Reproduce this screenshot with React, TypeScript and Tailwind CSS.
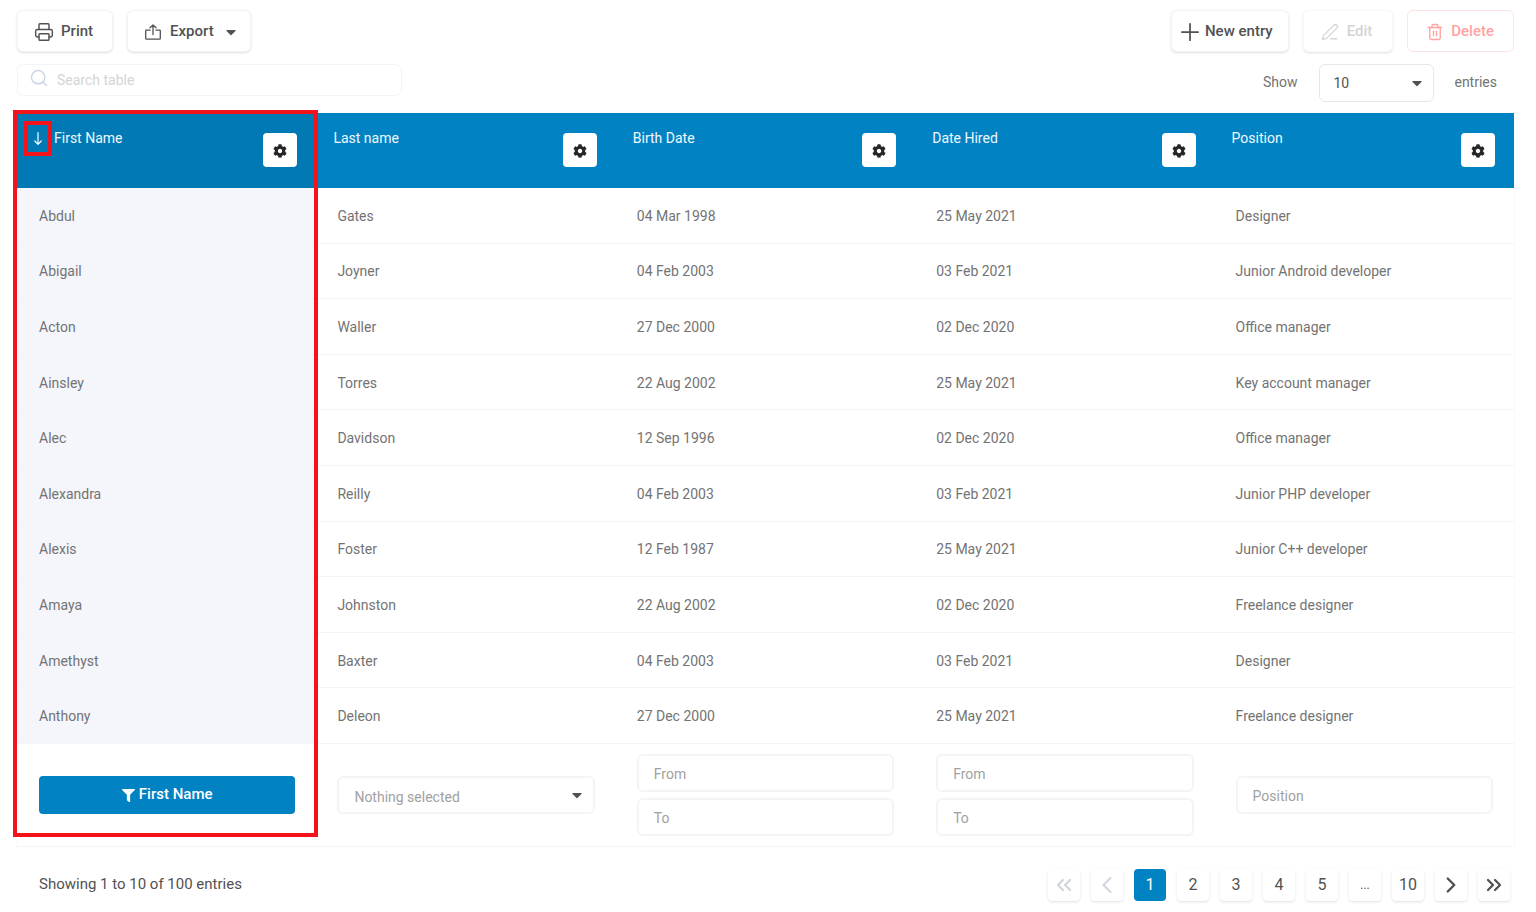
import { ChevronLeft, ChevronRight, ChevronsLeft, ChevronsRight, PenLine, Plus, Printer, Search, Trash2 } from "lucide-react";
import { FaCaretDown, FaCog, FaFilter } from "react-icons/fa";
import type { ReactNode } from "react";

const rows = [
  ["Abdul", "Gates", "04 Mar 1998", "25 May 2021", "Designer"],
  ["Abigail", "Joyner", "04 Feb 2003", "03 Feb 2021", "Junior Android developer"],
  ["Acton", "Waller", "27 Dec 2000", "02 Dec 2020", "Office manager"],
  ["Ainsley", "Torres", "22 Aug 2002", "25 May 2021", "Key account manager"],
  ["Alec", "Davidson", "12 Sep 1996", "02 Dec 2020", "Office manager"],
  ["Alexandra", "Reilly", "04 Feb 2003", "03 Feb 2021", "Junior PHP developer"],
  ["Alexis", "Foster", "12 Feb 1987", "25 May 2021", "Junior C++ developer"],
  ["Amaya", "Johnston", "22 Aug 2002", "02 Dec 2020", "Freelance designer"],
  ["Amethyst", "Baxter", "04 Feb 2003", "03 Feb 2021", "Designer"],
  ["Anthony", "Deleon", "27 Dec 2000", "25 May 2021", "Freelance designer"],
];

function Btn({ children, className = "" }: { children: ReactNode; className?: string }) {
  return (
    <button className={`flex h-10.5 items-center rounded-md border pt-0.5 text-[15px] font-medium ${className}`}>
      {children}
    </button>
  );
}

const active = "border-gray-100 bg-white text-neutral-600 shadow";

function Field({ placeholder }: { placeholder: string }) {
  return (
    <input
      placeholder={placeholder}
      className="h-9.5 w-full rounded-md border-2 border-gray-100 bg-white px-3.75 pt-0.5 text-sm outline-none placeholder:text-neutral-400"
    />
  );
}

function Gear() {
  return (
    <button className="mt-1.25 flex size-8.5 flex-none items-center justify-center rounded-sm bg-white pt-0.5 text-neutral-800">
      <FaCog size={14} />
    </button>
  );
}

function HeadCell({ label, first }: { label: string; first?: boolean }) {
  return (
    <div className={`flex items-start justify-between pt-3.75 pr-4.75 pl-4.25 ${first ? "bg-[#0079b5]" : "bg-[#0082c3]"}`}>
      <div className="flex items-center gap-3 text-sm text-sky-50">
        {first && (
          <svg width="8" height="13" viewBox="0 0 8 13" fill="none" stroke="white" strokeWidth="1.2" strokeLinecap="round" strokeLinejoin="round">
            <path d="M4 .7V12.3M.8 9 4 12.3 7.2 9" />
          </svg>
        )}
        {label}
      </div>
      <Gear />
    </div>
  );
}

function Page({ children, on, muted, small }: { children: ReactNode; on?: boolean; muted?: boolean; small?: boolean }) {
  return (
    <div
      className={`flex size-8 items-center justify-center rounded-sm ${small ? "text-xs" : "text-base"} ${
        on ? "bg-[#0082c3] text-white" : `bg-white shadow ${muted ? "text-gray-300" : "text-neutral-600"}`
      }`}
    >
      {children}
    </div>
  );
}

export default function App() {
  return (
    <div className="relative flex h-screen flex-col overflow-hidden bg-white pl-4 pr-5.25 text-sm text-neutral-500" style={{ fontFamily: "Roboto, sans-serif" }}>
      <div className="flex flex-none justify-between px-px pt-2.5 pb-2.5">
        <div className="flex flex-col gap-3">
          <div className="flex gap-3.5">
            <Btn className={`${active} gap-1.75 pl-4 pr-4.75`}>
              <Printer size={20} strokeWidth={1.75} />
              Print
            </Btn>
            <Btn className={`${active} gap-2.25 pl-4.25 pr-2.75`}>
              <svg width="16" height="16" viewBox="0 0 16 16" fill="none" stroke="currentColor" strokeWidth="1.3" strokeLinecap="round" strokeLinejoin="round">
                <path d="M5 6.2H1.2a.5.5 0 0 0-.5.5v7.6c0 .5.4.9.9.9h12.8c.5 0 .9-.4.9-.9V6.7a.5.5 0 0 0-.5-.5H11M8 10.5V1M5 3.8 8 1l3 2.8" />
              </svg>
              Export
              <FaCaretDown size={16} />
            </Btn>
          </div>
          <div className="relative w-96.25">
            <Search size={20} strokeWidth={1.75} className="absolute left-3 top-1 text-slate-300" />
            <input
              placeholder="Search table"
              className="h-8 w-full rounded-md border border-gray-100 bg-white pl-9.75 text-sm outline-none placeholder:text-neutral-300"
            />
          </div>
        </div>
        <div className="flex flex-col items-end gap-3">
          <div className="flex gap-3.5">
            <Btn className={`${active} gap-0.25 pl-1 pr-3.75`}>
              <Plus size={28} strokeWidth={1.5} />
              New entry
            </Btn>
            <Btn className="gap-2 border-gray-50 bg-white pl-4.25 pr-5 text-neutral-300 shadow-sm">
              <PenLine size={18} strokeWidth={1.75} />
              Edit
            </Btn>
            <Btn className="gap-1.75 border-red-100 bg-white pl-4.5 pr-4.75 text-red-300">
              <Trash2 size={18} strokeWidth={1.75} />
              Delete
            </Btn>
          </div>
          <div className="flex h-9.5 items-center gap-5.25 pr-4.25">
            <span className="pb-0.5">Show</span>
            <div className="-mr-px ml-px flex h-9.5 w-28.75 items-center justify-between rounded-md border border-gray-200 pl-3.25 pr-2 text-neutral-600">
              <span>10</span>
              <FaCaretDown size={16} className="text-neutral-600" />
            </div>
            <span className="pb-0.5">entries</span>
          </div>
        </div>
      </div>

      <div className="flex min-h-0 flex-1 flex-col border-x border-t border-b border-gray-50 border-b-gray-100">
        <div className="grid h-18.75 flex-none grid-cols-5">
          <HeadCell label="First Name" first />
          <HeadCell label="Last name" />
          <HeadCell label="Birth Date" />
          <HeadCell label="Date Hired" />
          <HeadCell label="Position" />
        </div>
        <div className="grid min-h-0 flex-1 grid-rows-10">
          {rows.map((r) => (
            <div key={r[0]} className="grid grid-cols-5 border-b border-gray-100">
              {r.map((c, i) => (
                <div key={i} className={`flex items-center pt-px ${i === 0 ? "bg-[#f4f6fb] pl-5.5" : "pl-5.25"}`}>
                  {c}
                </div>
              ))}
            </div>
          ))}
        </div>
        <div className="grid flex-none grid-cols-5 items-center py-2.5">
          <div className="pl-5.5 pr-5.25">
            <button className="flex h-9.5 w-full items-center justify-center gap-1 rounded-sm bg-[#0082c3] text-[15px] font-medium text-white">
              <FaFilter size={13} />
              First Name
            </button>
          </div>
          <div className="px-5.25">
            <div className="flex h-9.5 items-center justify-between rounded-md border-2 border-gray-100 pl-3.75 pr-2 pt-1 text-neutral-400">
              Nothing selected
              <FaCaretDown size={16} className="-mt-1 text-neutral-600" />
            </div>
          </div>
          <div className="flex flex-col gap-1.5 px-5.25">
            <Field placeholder="From" />
            <Field placeholder="To" />
          </div>
          <div className="flex flex-col gap-1.5 px-5.25">
            <Field placeholder="From" />
            <Field placeholder="To" />
          </div>
          <div className="px-5.25">
            <Field placeholder="Position" />
          </div>
        </div>
      </div>

      <div className="h-16.25 flex-none pl-5.75 pr-1.25 pt-5.5">
        <div className="flex h-8 items-center justify-between">
          <span className="text-[15px] text-neutral-600">Showing 1 to 10 of 100 entries</span>
          <div className="flex gap-2.75">
            <Page muted><ChevronsLeft size={24} strokeWidth={2.25} /></Page>
            <Page muted><ChevronLeft size={28} strokeWidth={1.75} /></Page>
            <Page on>1</Page>
            <Page>2</Page>
            <Page>3</Page>
            <Page>4</Page>
            <Page>5</Page>
            <Page small>...</Page>
            <Page>10</Page>
            <Page><ChevronRight size={26} strokeWidth={2.25} /></Page>
            <Page><ChevronsRight size={24} strokeWidth={2.25} /></Page>
          </div>
        </div>
      </div>

      <div className="pointer-events-none absolute left-[13px] top-[110px] h-[727px] w-[305px] border-4 border-[#f5131b]" />
      <div className="pointer-events-none absolute left-6 top-[121px] h-[35px] w-7 border-4 border-[#f5131b]" />
    </div>
  );
}
